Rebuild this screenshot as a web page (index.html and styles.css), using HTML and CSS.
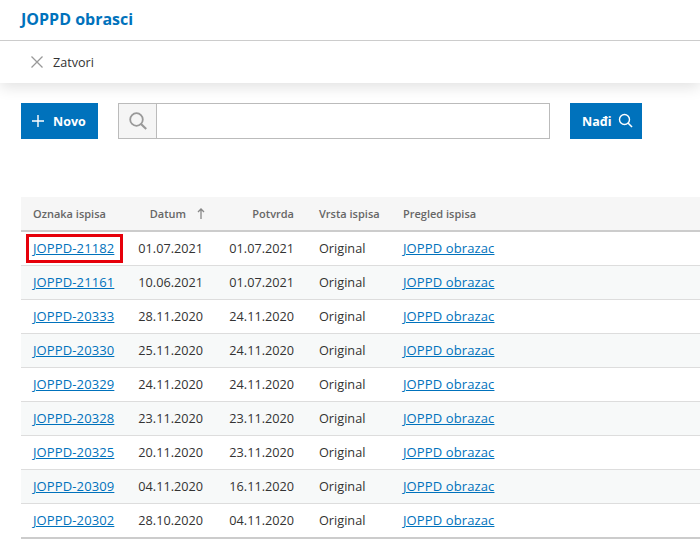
FILE: index.html
```html
<!DOCTYPE html>
<html lang="hr">
<head>
<meta charset="utf-8">
<title>JOPPD obrasci</title>
<link rel="stylesheet" href="styles.css">
</head>
<body>
<header class="top">
  <h1 class="title">JOPPD obrasci</h1>
  <div class="toolbar">
    <svg class="close-icon" width="14" height="14" viewBox="0 0 14 14"><path d="M1.5 1.5l11 11M12.5 1.5l-11 11" stroke="#999" stroke-width="1.3" fill="none"/></svg>
    <span>Zatvori</span>
  </div>
</header>
<div class="actions">
  <a class="btn btn-new">
    <svg width="14" height="14" viewBox="0 0 14 14"><path d="M7 1v12M1 7h12" stroke="#fff" stroke-width="1.4" fill="none"/></svg>
    <span>Novo</span>
  </a>
  <div class="search">
    <div class="addon">
      <svg width="18" height="18" viewBox="0 0 18 18"><circle cx="7.5" cy="7.5" r="6.3" stroke="#999" stroke-width="1.8" fill="none"/><path d="M12 12l5.2 5" stroke="#999" stroke-width="2.2" fill="none"/></svg>
    </div>
    <div class="field"></div>
  </div>
  <a class="btn btn-find">
    <span>Nađi</span>
    <svg width="15" height="15" viewBox="0 0 15 15"><circle cx="6.5" cy="6.5" r="5" stroke="#fff" stroke-width="1.4" fill="none"/><path d="M10 10l4 4" stroke="#fff" stroke-width="1.6" fill="none"/></svg>
  </a>
</div>
<table class="grid">
  <thead>
    <tr>
      <th class="c1">Oznaka ispisa</th>
      <th class="c2">Datum<svg class="sort" width="8" height="11" viewBox="0 0 8 11"><path d="M4 11V1M1 4l3-3 3 3" stroke="#888" stroke-width="1.3" fill="none"/></svg></th>
      <th class="c3">Potvrda</th>
      <th class="c4">Vrsta ispisa</th>
      <th class="c5">Pregled ispisa</th>
    </tr>
  </thead>
  <tbody>
    <tr><td class="c1"><a class="marked">JOPPD-21182</a></td><td class="c2">01.07.2021</td><td class="c3">01.07.2021</td><td class="c4">Original</td><td class="c5"><a>JOPPD obrazac</a></td></tr>
    <tr><td class="c1"><a>JOPPD-21161</a></td><td class="c2">10.06.2021</td><td class="c3">01.07.2021</td><td class="c4">Original</td><td class="c5"><a>JOPPD obrazac</a></td></tr>
    <tr><td class="c1"><a>JOPPD-20333</a></td><td class="c2">28.11.2020</td><td class="c3">24.11.2020</td><td class="c4">Original</td><td class="c5"><a>JOPPD obrazac</a></td></tr>
    <tr><td class="c1"><a>JOPPD-20330</a></td><td class="c2">25.11.2020</td><td class="c3">24.11.2020</td><td class="c4">Original</td><td class="c5"><a>JOPPD obrazac</a></td></tr>
    <tr><td class="c1"><a>JOPPD-20329</a></td><td class="c2">24.11.2020</td><td class="c3">24.11.2020</td><td class="c4">Original</td><td class="c5"><a>JOPPD obrazac</a></td></tr>
    <tr><td class="c1"><a>JOPPD-20328</a></td><td class="c2">23.11.2020</td><td class="c3">23.11.2020</td><td class="c4">Original</td><td class="c5"><a>JOPPD obrazac</a></td></tr>
    <tr><td class="c1"><a>JOPPD-20325</a></td><td class="c2">20.11.2020</td><td class="c3">23.11.2020</td><td class="c4">Original</td><td class="c5"><a>JOPPD obrazac</a></td></tr>
    <tr><td class="c1"><a>JOPPD-20309</a></td><td class="c2">04.11.2020</td><td class="c3">16.11.2020</td><td class="c4">Original</td><td class="c5"><a>JOPPD obrazac</a></td></tr>
    <tr><td class="c1"><a>JOPPD-20302</a></td><td class="c2">28.10.2020</td><td class="c3">04.11.2020</td><td class="c4">Original</td><td class="c5"><a>JOPPD obrazac</a></td></tr>
  </tbody>
</table>
</body>
</html>
```
FILE: styles.css
```css
* { box-sizing: border-box; }
html, body { margin: 0; padding: 0; }
body {
  width: 700px;
  height: 542px;
  overflow: hidden;
  background: #fff;
  font-family: "Open Sans", sans-serif;
  font-size: 13px;
  color: #333;
}
.top {
  background: #fff;
  box-shadow: 0 4px 14px rgba(0, 0, 0, 0.12);
}
.title {
  margin: 0;
  height: 41px;
  padding: 8px 0 0 21px;
  border-bottom: 1px solid #ccc;
  font-size: 16px;
  line-height: 22px;
  font-weight: 700;
  color: #0072bc;
}
.toolbar {
  height: 42px;
  display: flex;
  align-items: center;
  padding-left: 30px;
  gap: 9px;
  font-size: 12.6px;
}
.close-icon { margin-top: -1px; }
.actions {
  display: flex;
  margin: 20px 0 0 21px;
  height: 36px;
}
.btn {
  display: flex;
  align-items: center;
  height: 36px;
  background: #0072bc;
  color: #fff;
  font-size: 12.5px;
  font-weight: 700;
}
.btn-new { width: 77px; padding-left: 10px; gap: 8px; }
.btn-find { width: 72px; padding-left: 12px; gap: 8px; }
.btn-find svg { margin-top: -1px; margin-left: -2px; }
.search {
  display: flex;
  width: 432px;
  margin: 0 20px;
  border: 1px solid #bbb;
}
.addon {
  width: 38px;
  background: #f5f5f5;
  border-right: 1px solid #bbb;
  display: flex;
  align-items: center;
  justify-content: center;
}
.field { flex: 1; }
.grid {
  margin: 58px 0 0 21px;
  width: 679px;
  border-collapse: collapse;
  table-layout: fixed;
}
.grid th {
  height: 34px;
  background: #f6f6f6;
  border-bottom: 2px solid #ccc;
  font-size: 11px;
  font-weight: 600;
  color: #666;
  white-space: nowrap;
  padding: 0 0 1px;
}
.grid td {
  height: 34px;
  padding: 0;
  border-bottom: 1px solid #ddd;
  font-size: 12.7px;
}
.grid tbody tr:nth-child(even) td { background: #f7f9f9; }
.grid tbody tr:last-child td { border-bottom: 2px solid #ccc; height: 35px; padding-bottom: 1px; }
.grid a {
  color: #0072bc;
  text-decoration: underline;
  font-size: 13px;
  letter-spacing: 0.12px;
  font-weight: 500;
}
.grid .c1 { width: 105px; padding-left: 12px; text-align: left; }
.grid .c2 { width: 85px; text-align: right; padding-right: 8px; }
.grid th.c2 { padding-right: 6px; }
.grid .c3 { width: 83px; text-align: right; }
.grid .c4 { width: 86px; padding-left: 25px; text-align: left; }
.grid .c5 { padding-left: 23px; text-align: left; }
.sort { margin-left: 11px; vertical-align: -1px; }
.marked { position: relative; }
.marked::after {
  content: "";
  position: absolute;
  left: -7px;
  right: -9px;
  top: -5px;
  bottom: -6px;
  border: 3px solid #e6000a;
}
```
